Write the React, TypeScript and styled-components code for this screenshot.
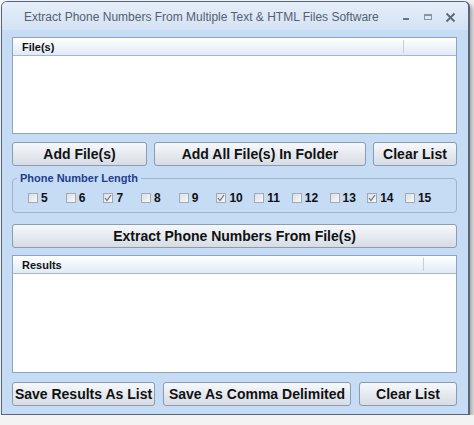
import React from 'react';
import styled, { createGlobalStyle } from 'styled-components';

const GlobalStyle = createGlobalStyle`
  html, body {
    margin: 0;
    padding: 0;
    background: #f3f3f3;
  }
  body {
    font-family: "Liberation Sans", Arial, sans-serif;
  }
`

const Window = styled.div`
  margin: 1px 0 0 1px;
  width: 466px;
  border: 1px solid #56677b;
  border-right-width: 2px;
  border-radius: 6px 6px 0 0;
  background: #c6dbf4;
  box-shadow: 3px 3px 4px rgba(0, 0, 0, 0.3);
  overflow: hidden;
`

const TitleBar = styled.div`
  height: 28px;
  display: flex;
  align-items: center;
  padding: 0 12px 0 22px;
  background: linear-gradient(#e6eef9, #d3e2f5);
`

const Title = styled.div`
  flex: 1;
  font-size: 12px;
  color: #56616f;
  white-space: nowrap;
  padding-top: 2px;
`

const Controls = styled.div`
  display: flex;
  align-items: center;
  gap: 12px;
  padding-top: 2px;
`

const Client = styled.div`
  padding: 7px 11px 8px 10px;
  display: flex;
  flex-direction: column;
`

const ListBox = styled.div<{ $height: number; $top?: number }>`
  height: ${p => p.$height}px;
  margin-top: ${p => p.$top ?? 0}px;
  border: 1px solid #8fa3bd;
  background: #ffffff;
  box-sizing: border-box;
`

const ListHeader = styled.div<{ $divider: number }>`
  height: 18px;
  display: flex;
  align-items: center;
  padding-left: 9px;
  font-size: 11px;
  font-weight: bold;
  color: #111;
  background: linear-gradient(#ffffff, #e0eaf6);
  border-bottom: 1px solid #a5b7cd;
  box-sizing: border-box;
  position: relative;
  &::after {
    content: "";
    position: absolute;
    left: ${p => p.$divider}px;
    top: 2px;
    bottom: 2px;
    width: 1px;
    background: #c3cfdd;
  }
`

const ButtonRow = styled.div<{ $top: number }>`
  display: flex;
  justify-content: space-between;
  margin-top: ${p => p.$top}px;
`

const Button = styled.button<{ $width?: number; $top?: number }>`
  width: ${p => (p.$width ? `${p.$width}px` : '100%')};
  margin-top: ${p => p.$top ?? 0}px;
  height: 24px;
  padding: 0;
  border: 1px solid #8b9bb0;
  border-radius: 3px;
  background: linear-gradient(#f6f8fb, #e6eaf0 50%, #d6dce5);
  font-family: "Liberation Sans", Arial, sans-serif;
  font-size: 14px;
  font-weight: bold;
  color: #111;
  box-sizing: border-box;
`

const Group = styled.fieldset`
  margin: 6px 0 0 0;
  padding: 7px 0 7px 15px;
  min-width: 0;
  border: 1px solid #a2b4ca;
  border-radius: 4px;
`

const Legend = styled.legend`
  margin-left: -11px;
  padding: 0 3px;
  font-size: 11px;
  line-height: 12px;
  font-weight: bold;
  color: #1d3f8e;
`

const Checks = styled.div`
  display: flex;
  height: 14px;
  align-items: center;
`

const CheckItem = styled.div`
  width: 37.7px;
  flex: none;
  display: flex;
  align-items: center;
  font-size: 12px;
  font-weight: bold;
  color: #111;
`

const Box = styled.span`
  width: 10px;
  height: 10px;
  margin-right: 3px;
  border: 1px solid #a2aab5;
  background: linear-gradient(135deg, #dcdfe3, #f7f8f9);
  box-sizing: border-box;
  display: flex;
  align-items: center;
  justify-content: center;
`

const lengths = [5, 6, 7, 8, 9, 10, 11, 12, 13, 14, 15]
const checked = [7, 10, 14]

const App = () => {
  return (
    <>
      <GlobalStyle />
      <Window>
        <TitleBar>
          <Title>Extract Phone Numbers From Multiple Text &amp; HTML Files Software</Title>
          <Controls>
            <svg width="9" height="10" viewBox="0 0 9 10">
              <rect x="1" y="6" width="6" height="2" fill="#6b7582" />
            </svg>
            <svg width="10" height="10" viewBox="0 0 10 10">
              <rect x="1.5" y="2.5" width="7" height="5" fill="none" stroke="#8a939e" />
              <rect x="1" y="2" width="8" height="2" fill="#8a939e" />
            </svg>
            <svg width="11" height="11" viewBox="0 0 11 11">
              <path d="M1.5 1.5 L9.5 9.5 M9.5 1.5 L1.5 9.5" stroke="#5d6773" strokeWidth="1.8" />
            </svg>
          </Controls>
        </TitleBar>
        <Client>
          <ListBox $height={97}>
            <ListHeader $divider={390}>File(s)</ListHeader>
          </ListBox>
          <ButtonRow $top={8}>
            <Button $width={135}>Add File(s)</Button>
            <Button $width={212}>Add All File(s) In Folder</Button>
            <Button $width={84}>Clear List</Button>
          </ButtonRow>
          <Group>
            <Legend>Phone Number Length</Legend>
            <Checks>
              {lengths.map(n => (
                <CheckItem key={n}>
                  <Box>
                    {checked.includes(n) && (
                      <svg width="8" height="8" viewBox="0 0 8 8">
                        <path d="M1 4 L3 6.5 L7 1" fill="none" stroke="#6d737a" strokeWidth="1.2" />
                      </svg>
                    )}
                  </Box>
                  {n}
                </CheckItem>
              ))}
            </Checks>
          </Group>
          <Button $top={11}>Extract Phone Numbers From File(s)</Button>
          <ListBox $height={118} $top={7}>
            <ListHeader $divider={410}>Results</ListHeader>
          </ListBox>
          <ButtonRow $top={9}>
            <Button $width={143}>Save Results As List</Button>
            <Button $width={188}>Save As Comma Delimited</Button>
            <Button $width={98}>Clear List</Button>
          </ButtonRow>
        </Client>
      </Window>
    </>
  );
};

export default App;
